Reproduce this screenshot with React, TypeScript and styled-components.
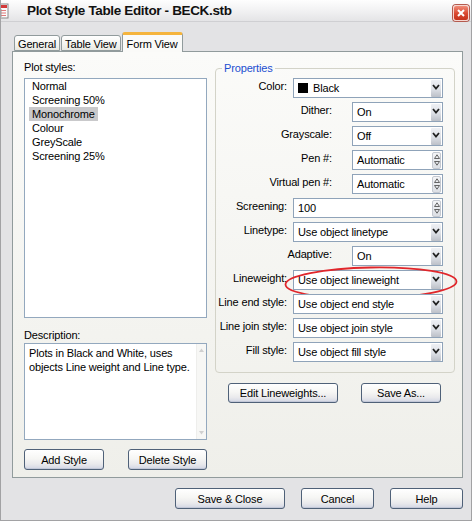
import React from "react";
import styled, { createGlobalStyle } from "styled-components";

const FONT = `"Liberation Sans", Arial, sans-serif`;

const Global = createGlobalStyle`
  * { box-sizing: border-box; }
  body { margin: 0; background: #ffffff; font-family: ${FONT}; font-size: 11px; color: #000; }
`;

const Window = styled.div`
  width: 472px;
  height: 521px;
  background: #e3e3e5;
  border: 1px solid #a2a2a4;
  border-top: none;
  display: flex;
  flex-direction: column;
  overflow: hidden;
`;

const TitleBar = styled.div`
  height: 22px;
  flex: none;
  display: flex;
  align-items: center;
  padding-right: 2px;
  background: linear-gradient(#fefefe, #f3f3f4 45%, #e4e4e6);
  border-bottom: 1px solid #cfcfd2;
`;

const TitleIcon = styled.svg`
  margin-left: -8px;
  flex: none;
`;

const TitleText = styled.span`
  margin-left: 18px;
  font-weight: bold;
  font-size: 13.5px;
  letter-spacing: -0.35px;
  color: #111;
  white-space: nowrap;
`;

const CloseButton = styled.div`
  margin-left: auto;
  width: 16px;
  height: 16px;
  margin-top: 4px;
  border-radius: 3px;
  border: 1px solid #f6d6d0;
  background: linear-gradient(#f08c78, #d9472f 55%, #c5321c);
  display: flex;
  align-items: center;
  justify-content: center;
  box-shadow: 0 0 0 1px #b45a4e;
`;

const Body = styled.div`
  flex: 1;
  display: flex;
  flex-direction: column;
  padding: 10px 8px 10px 11px;
`;

const TabRow = styled.div`
  display: flex;
  align-items: flex-end;
  height: 19px;
  padding-left: 2px;
  gap: 1px;
`;

const Tab = styled.div<{ $active?: boolean }>`
  position: relative;
  z-index: ${(p) => (p.$active ? 2 : 0)};
  height: ${(p) => (p.$active ? "20px" : "16px")};
  margin-bottom: ${(p) => (p.$active ? "-1px" : "0")};
  padding: 0 ${(p) => (p.$active ? 4 : 3)}px;
  display: flex;
  align-items: center;
  justify-content: center;
  border: 1px solid #919b9c;
  border-bottom: ${(p) => (p.$active ? "none" : "1px solid #919b9c")};
  border-top: ${(p) => (p.$active ? "3px solid #f5b43c" : "1px solid #919b9c")};
  border-radius: 3px 3px 0 0;
  background: ${(p) => (p.$active ? "#fafaf8" : "linear-gradient(#ffffff, #f4f4f0 60%, #e8e8e2)")};
  white-space: nowrap;
  letter-spacing: -0.15px;
  padding-top: ${(p) => (p.$active ? "0" : "1px")};
`;

const Panel = styled.div`
  height: 427px;
  border: 1px solid #919b9c;
  background: linear-gradient(#fbfbf9, #efefea);
  display: flex;
  gap: 8px;
  padding: 8px 7px 0 11px;
`;

const LeftColumn = styled.div`
  width: 183px;
  display: flex;
  flex-direction: column;
`;

const RightColumn = styled.div`
  width: 240px;
  display: flex;
  flex-direction: column;
`;

const FieldLabel = styled.div<{ $top?: number }>`
  line-height: 14px;
  margin-top: ${(p) => p.$top ?? 0}px;
  margin-bottom: ${(p) => (p.$top ? 1 : 4)}px;
  letter-spacing: -0.15px;
`;

const ListBox = styled.div`
  height: 240px;
  background: #fff;
  border: 1px solid #93a8be;
  padding: 0 0 0 4px;
  display: flex;
  flex-direction: column;
  align-items: flex-start;
`;

const ListItem = styled.div<{ $selected?: boolean }>`
  line-height: 14px;
  height: 14px;
  padding: 0 3px;
  background: ${(p) => (p.$selected ? "#c9c9cb" : "transparent")};
  letter-spacing: -0.15px;
  white-space: nowrap;
`;

const TextArea = styled.div`
  height: 97px;
  background: #fff;
  border: 1px solid #93a8be;
  display: flex;
`;

const TextContent = styled.div`
  flex: 1;
  padding: 2px 4px;
  line-height: 14px;
  letter-spacing: -0.15px;
`;

const ScrollTrack = styled.div`
  width: 10px;
  background: #f7f7f5;
  border-left: 1px solid #eeeeec;
  display: flex;
  flex-direction: column;
  justify-content: space-between;
  align-items: center;
  padding: 4px 0;
`;

const ButtonRow = styled.div<{ $top: number; $spread?: boolean; $gap?: number; $left?: number }>`
  display: flex;
  margin-top: ${(p) => p.$top}px;
  margin-left: ${(p) => p.$left ?? 0}px;
  justify-content: ${(p) => (p.$spread ? "space-between" : "flex-start")};
  gap: ${(p) => p.$gap ?? 0}px;
`;

const BottomRow = styled.div`
  display: flex;
  justify-content: flex-end;
  gap: 16px;
  margin-top: 10px;
`;

const Button = styled.div<{ $w: number; $h?: number }>`
  width: ${(p) => p.$w}px;
  height: ${(p) => p.$h ?? 21}px;
  border: 1px solid #4f6178;
  border-radius: 3px;
  background: linear-gradient(#ffffff, #f6f6f4 45%, #e9e9ec 75%, #d2d6e4);
  box-shadow: inset 0 -1px 0 #c3c8d8;
  display: flex;
  align-items: center;
  justify-content: center;
  letter-spacing: -0.15px;
  white-space: nowrap;
`;

const Group = styled.fieldset`
  margin: 1px 0 0 0;
  padding: 3px 11px 10px 0;
  border: 1px solid #d3d3c8;
  border-radius: 4px;
  display: flex;
  flex-direction: column;
  gap: 4px;
  min-width: 0;
`;

const Legend = styled.legend`
  margin-left: 6px;
  padding: 0 2px;
  line-height: 14px;
  color: #1c4fd0;
  letter-spacing: -0.15px;
`;

const Row = styled.div`
  display: flex;
  align-items: center;
  justify-content: flex-end;
  height: 20px;
`;

const RowLabel = styled.span<{ $gap: number }>`
  margin-right: ${(p) => p.$gap}px;
  white-space: nowrap;
  letter-spacing: -0.15px;
  margin-top: -4px;
`;

const Field = styled.div<{ $w: number }>`
  position: relative;
  width: ${(p) => p.$w}px;
  height: 20px;
  background: #fff;
  border: 1px solid #8fa3b9;
  display: flex;
  align-items: center;
  padding: 0 1px 0 4px;
`;

const FieldText = styled.span`
  flex: 1;
  white-space: nowrap;
  letter-spacing: -0.15px;
  display: flex;
  align-items: center;
  gap: 5px;
`;

const Swatch = styled.span`
  width: 10px;
  height: 10px;
  background: #000;
  display: inline-block;
`;

const DropButton = styled.div`
  width: 10px;
  height: 17px;
  border-radius: 1px;
  background: linear-gradient(#eef0f4, #dfe2e8 50%, #bcc0c8);
  display: flex;
  align-items: flex-start;
  justify-content: center;
  padding-top: 4px;
`;

const SpinButton = styled.div`
  width: 9px;
  height: 17px;
  border-radius: 2px;
  background: linear-gradient(#f4f5f7, #dcdfe5);
  border: 1px solid #c4c8d0;
  display: flex;
  flex-direction: column;
  align-items: center;
  justify-content: space-around;
  padding: 1px 0;
`;

const Annotation = styled.svg`
  position: absolute;
  left: -10px;
  top: -5px;
  pointer-events: none;
`;

const Chevron = () => (
  <svg width="8" height="6" viewBox="0 0 8 6">
    <path d="M1 1 L4 4.5 L7 1" fill="none" stroke="#222" strokeWidth="1.8" />
  </svg>
);

const Spin = () => (
  <SpinButton>
    <svg width="6" height="5" viewBox="0 0 6 5">
      <path d="M0.5 4.5 L3 0.8 L5.5 4.5 Z" fill="none" stroke="#555" strokeWidth="0.9" />
    </svg>
    <svg width="6" height="5" viewBox="0 0 6 5">
      <path d="M0.5 0.5 L3 4.2 L5.5 0.5 Z" fill="none" stroke="#555" strokeWidth="0.9" />
    </svg>
  </SpinButton>
);

type Prop = {
  label: string;
  value: string;
  wide: boolean;
  kind: "combo" | "spin";
  swatch?: boolean;
  circled?: boolean;
};

const props: Prop[] = [
  { label: "Color:", value: "Black", wide: true, kind: "combo", swatch: true },
  { label: "Dither:", value: "On", wide: false, kind: "combo" },
  { label: "Grayscale:", value: "Off", wide: false, kind: "combo" },
  { label: "Pen #:", value: "Automatic", wide: false, kind: "spin" },
  { label: "Virtual pen #:", value: "Automatic", wide: false, kind: "spin" },
  { label: "Screening:", value: "100", wide: true, kind: "spin" },
  { label: "Linetype:", value: "Use object linetype", wide: true, kind: "combo" },
  { label: "Adaptive:", value: "On", wide: false, kind: "combo" },
  { label: "Lineweight:", value: "Use object lineweight", wide: true, kind: "combo", circled: true },
  { label: "Line end style:", value: "Use object end style", wide: true, kind: "combo" },
  { label: "Line join style:", value: "Use object join style", wide: true, kind: "combo" },
  { label: "Fill style:", value: "Use object fill style", wide: true, kind: "combo" },
];

const styles = ["Normal", "Screening 50%", "Monochrome", "Colour", "GreyScale", "Screening 25%"];

export default function App() {
  return (
    <>
      <Global />
      <Window>
        <TitleBar>
          <TitleIcon width="16" height="16" viewBox="0 0 16 16">
            <rect x="1" y="1" width="14" height="14" fill="#fbfbfb" stroke="#8a8a8a" />
            <rect x="2" y="2" width="12" height="3" fill="#d23a3a" />
            <path d="M3 7.5 H13 M3 10 H13 M3 12.5 H13" stroke="#e07a7a" strokeWidth="1.2" />
            <path d="M8 6 V14" stroke="#9a9a9a" strokeWidth="1" />
          </TitleIcon>
          <TitleText>Plot Style Table Editor - BECK.stb</TitleText>
          <CloseButton>
            <svg width="8" height="8" viewBox="0 0 8 8">
              <path d="M1 1 L7 7 M7 1 L1 7" stroke="#fff" strokeWidth="2" />
            </svg>
          </CloseButton>
        </TitleBar>
        <Body>
          <TabRow>
            <Tab>General</Tab>
            <Tab>Table View</Tab>
            <Tab $active>Form View</Tab>
          </TabRow>
          <Panel>
            <LeftColumn>
              <FieldLabel>Plot styles:</FieldLabel>
              <ListBox>
                {styles.map((s) => (
                  <ListItem key={s} $selected={s === "Monochrome"}>
                    {s}
                  </ListItem>
                ))}
              </ListBox>
              <FieldLabel $top={10}>Description:</FieldLabel>
              <TextArea>
                <TextContent>
                  Plots in Black and White, uses
                  <br />
                  objects Line weight and Line type.
                </TextContent>
                <ScrollTrack>
                  <svg width="5" height="4" viewBox="0 0 5 4">
                    <path d="M0 4 L2.5 0.5 L5 4 Z" fill="#d0d0d0" />
                  </svg>
                  <svg width="5" height="4" viewBox="0 0 5 4">
                    <path d="M0 0 L2.5 3.5 L5 0 Z" fill="#d0d0d0" />
                  </svg>
                </ScrollTrack>
              </TextArea>
              <ButtonRow $top={9} $spread>
                <Button $w={80}>Add Style</Button>
                <Button $w={79}>Delete Style</Button>
              </ButtonRow>
            </LeftColumn>
            <RightColumn>
              <Group>
                <Legend>Properties</Legend>
                {props.map((p) => (
                  <Row key={p.label}>
                    <RowLabel $gap={p.wide ? 6 : 20}>{p.label}</RowLabel>
                    <Field $w={p.wide ? 150 : 91}>
                      <FieldText>
                        {p.swatch && <Swatch />}
                        {p.value}
                      </FieldText>
                      {p.kind === "combo" ? (
                        <DropButton>
                          <Chevron />
                        </DropButton>
                      ) : (
                        <Spin />
                      )}
                      {p.circled && (
                        <Annotation width="174" height="34" viewBox="0 0 174 34">
                          <ellipse
                            cx="87"
                            cy="17"
                            rx="85.5"
                            ry="15.5"
                            fill="none"
                            stroke="#e0262b"
                            strokeWidth="1.8"
                            transform="rotate(-1 87 17)"
                          />
                        </Annotation>
                      )}
                    </Field>
                  </Row>
                ))}
              </Group>
              <ButtonRow $top={10} $left={13} $gap={23}>
                <Button $w={110} $h={20}>Edit Lineweights...</Button>
                <Button $w={80} $h={20}>Save As...</Button>
              </ButtonRow>
            </RightColumn>
          </Panel>
          <BottomRow>
            <Button $w={110}>Save &amp; Close</Button>
            <Button $w={73}>Cancel</Button>
            <Button $w={73}>Help</Button>
          </BottomRow>
        </Body>
      </Window>
    </>
  );
}
